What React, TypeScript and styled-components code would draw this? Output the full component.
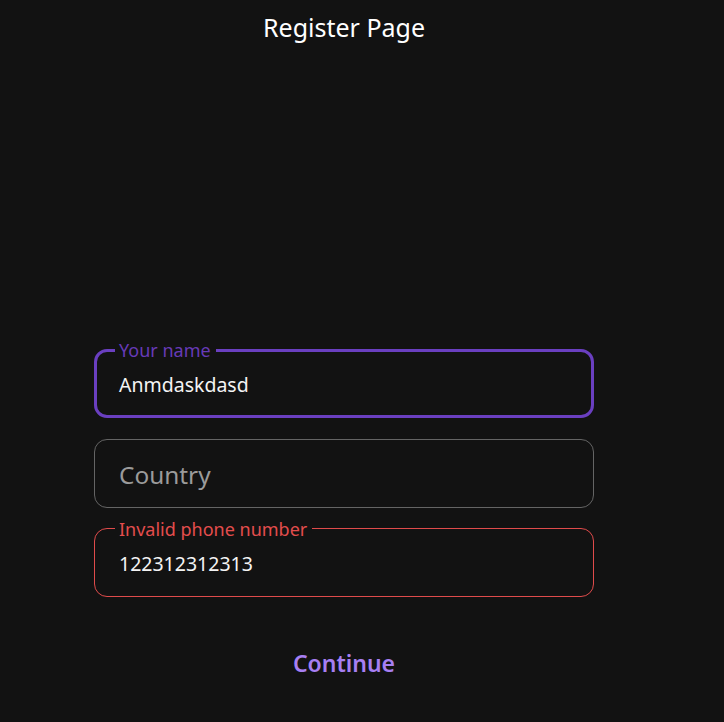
import React from "react";
import styled, { createGlobalStyle } from "styled-components";

const Global = createGlobalStyle`
  html, body {
    margin: 0;
    padding: 0;
    background: #121212;
  }
  body {
    font-family: "Noto Sans", "Open Sans", sans-serif;
    color: #ffffff;
  }
`;

const Page = styled.div`
  width: 688px;
  height: 722px;
  display: flex;
  flex-direction: column;
  align-items: center;
  background: #121212;
`;

const Title = styled.h1`
  margin: 0;
  height: 56px;
  display: flex;
  align-items: center;
  font-size: 25px;
  font-weight: 400;
  color: #ffffff;
  line-height: 1;
  padding-bottom: 2px;
  box-sizing: border-box;
`;

const Form = styled.div`
  margin-top: 293px;
  width: 500px;
  display: flex;
  flex-direction: column;
  gap: 20.5px;
`;

type Tone = "focus" | "idle" | "error";

const borderColor: Record<Tone, string> = {
  focus: "#6a3fc0",
  idle: "#646464",
  error: "#df4b4b",
};

const Field = styled.div`
  position: relative;
  height: 69px;
`;

const Box = styled.div<{ $tone: Tone }>`
  box-sizing: border-box;
  height: 100%;
  border: ${(p) => (p.$tone === "focus" ? 3 : 1)}px solid ${(p) => borderColor[p.$tone]};
  border-radius: 13px;
  display: flex;
  align-items: center;
  padding-left: ${(p) => (p.$tone === "focus" ? 22 : 24)}px;
`;

const Value = styled.span`
  font-size: 19.5px;
  color: #f4f4f4;
  padding-top: 2px;
`;

const Placeholder = styled.span`
  font-size: 24.4px;
  color: #9b9b9b;
  padding-top: 3px;
`;

const Label = styled.span<{ $tone: Tone }>`
  position: absolute;
  left: 21px;
  top: -9px;
  padding: 0 5px 0 4px;
  background: #121212;
  font-size: 18px;
  line-height: 20px;
  color: ${(p) => (p.$tone === "error" ? "#e34d4d" : "#673ab7")};
`;

const ContinueButton = styled.button`
  margin-top: 44px;
  background: none;
  border: none;
  font-family: "Noto Sans", "Open Sans", sans-serif;
  font-size: 23px;
  font-weight: 600;
  color: #a77ff2;
  padding: 6px 16px;
  cursor: pointer;
`;

export default function App() {
  return (
    <>
      <Global />
      <Page>
        <Title>Register Page</Title>
        <Form>
          <Field>
            <Box $tone="focus">
              <Value>Anmdaskdasd</Value>
            </Box>
            <Label $tone="focus">Your name</Label>
          </Field>
          <Field>
            <Box $tone="idle">
              <Placeholder>Country</Placeholder>
            </Box>
          </Field>
          <Field>
            <Box $tone="error">
              <Value>122312312313</Value>
            </Box>
            <Label $tone="error">Invalid phone number</Label>
          </Field>
        </Form>
        <ContinueButton>Continue</ContinueButton>
      </Page>
    </>
  );
}
